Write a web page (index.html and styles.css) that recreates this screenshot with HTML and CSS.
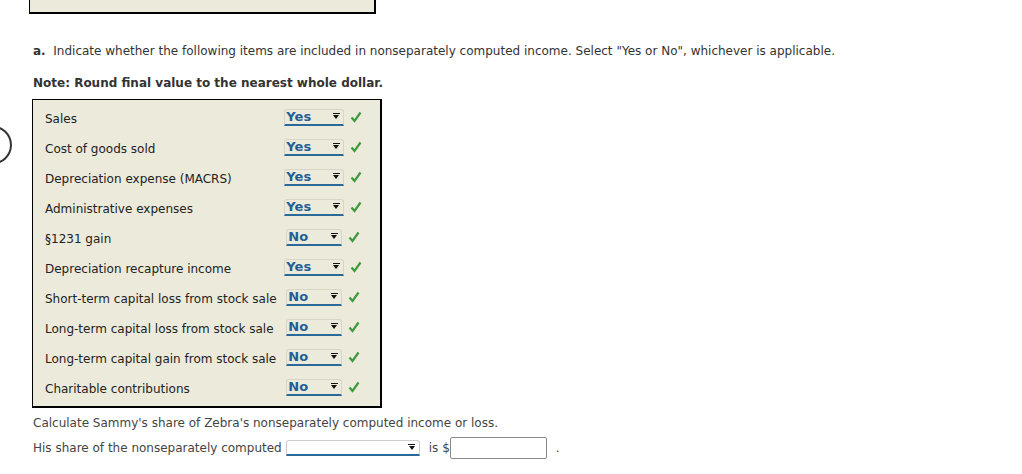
FILE: index.html
```html
<!DOCTYPE html>
<html>
<head>
<meta charset="utf-8">
<link rel="stylesheet" href="styles.css">
</head>
<body>
<div class="circle"></div>
<div class="page">
  <div class="prev-box">
    <div class="prev-row"><span>Charitable contributions</span><span>(4,200)</span></div>
  </div>

  <p class="instr"><b>a.</b>&nbsp; Indicate whether the following items are included in nonseparately computed income. Select "Yes or No", whichever is applicable.</p>
  <p class="note">Note: Round final value to the nearest whole dollar.</p>

  <div class="answer-box">
    <div class="grid">
      <div class="label">Sales</div>
      <div class="cell"><span class="sel yes">Yes<i class="arr"></i></span><svg class="chk" viewBox="0 0 12 12"><path d="M1.5 6.5 L4.5 10 L10.5 1.5" /></svg></div>

      <div class="label">Cost of goods sold</div>
      <div class="cell"><span class="sel yes">Yes<i class="arr"></i></span><svg class="chk" viewBox="0 0 12 12"><path d="M1.5 6.5 L4.5 10 L10.5 1.5" /></svg></div>

      <div class="label">Depreciation expense (MACRS)</div>
      <div class="cell"><span class="sel yes">Yes<i class="arr"></i></span><svg class="chk" viewBox="0 0 12 12"><path d="M1.5 6.5 L4.5 10 L10.5 1.5" /></svg></div>

      <div class="label">Administrative expenses</div>
      <div class="cell"><span class="sel yes">Yes<i class="arr"></i></span><svg class="chk" viewBox="0 0 12 12"><path d="M1.5 6.5 L4.5 10 L10.5 1.5" /></svg></div>

      <div class="label">§1231 gain</div>
      <div class="cell"><span class="sel no">No<i class="arr"></i></span><svg class="chk" viewBox="0 0 12 12"><path d="M1.5 6.5 L4.5 10 L10.5 1.5" /></svg></div>

      <div class="label">Depreciation recapture income</div>
      <div class="cell"><span class="sel yes">Yes<i class="arr"></i></span><svg class="chk" viewBox="0 0 12 12"><path d="M1.5 6.5 L4.5 10 L10.5 1.5" /></svg></div>

      <div class="label">Short-term capital loss from stock sale</div>
      <div class="cell"><span class="sel no">No<i class="arr"></i></span><svg class="chk" viewBox="0 0 12 12"><path d="M1.5 6.5 L4.5 10 L10.5 1.5" /></svg></div>

      <div class="label">Long-term capital loss from stock sale</div>
      <div class="cell"><span class="sel no">No<i class="arr"></i></span><svg class="chk" viewBox="0 0 12 12"><path d="M1.5 6.5 L4.5 10 L10.5 1.5" /></svg></div>

      <div class="label">Long-term capital gain from stock sale</div>
      <div class="cell"><span class="sel no">No<i class="arr"></i></span><svg class="chk" viewBox="0 0 12 12"><path d="M1.5 6.5 L4.5 10 L10.5 1.5" /></svg></div>

      <div class="label">Charitable contributions</div>
      <div class="cell"><span class="sel no">No<i class="arr"></i></span><svg class="chk" viewBox="0 0 12 12"><path d="M1.5 6.5 L4.5 10 L10.5 1.5" /></svg></div>
    </div>
  </div>

  <p class="calc">Calculate Sammy's share of Zebra's nonseparately computed income or loss.</p>
  <div class="share">
    <span>His share of the nonseparately computed</span>
    <span class="sel wide"><i class="arr"></i></span>
    <span class="is">is $</span>
    <span class="input"></span>
    <span class="dot">.</span>
  </div>
</div>
</body>
</html>
```
FILE: styles.css
```css
html, body {
  margin: 0;
  padding: 0;
  background: #fff;
}
body {
  font-family: "DejaVu Sans", Verdana, sans-serif;
  font-size: 12px;
  color: #333;
  position: relative;
  overflow: hidden;
  height: 474px;
}
.circle {
  position: absolute;
  left: -30px;
  top: 125px;
  width: 38px;
  height: 36px;
  border: 2px solid #333;
  border-radius: 50%;
}
.page {
  padding-left: 33px;
}
.prev-box {
  margin-left: -4px;
  width: 347px;
  height: 32px;
  margin-top: -18px;
  border: 1px solid #000;
  border-width: 1px 2px 2px 1px;
  background: #eceadb;
  box-sizing: border-box;
}
.prev-row {
  display: flex;
  justify-content: space-between;
  padding: 4px 14px 0 16px;
  color: #222;
}
.instr {
  margin: 29px 0 0;
  line-height: 16px;
}
.instr b { color: #333; }
.note {
  margin: 16px 0 0;
  font-weight: bold;
  line-height: 16px;
}
.answer-box {
  margin-top: 8px;
  margin-left: -1px;
  width: 350px;
  box-sizing: border-box;
  border: 1px solid #000;
  border-width: 1px 2px 2px 1px;
  background: #eceadb;
  padding: 4px 0 2px 12px;
}
.grid {
  display: grid;
  grid-template-columns: max-content 1fr;
  grid-auto-rows: 30px;
  align-items: center;
}
.label {
  color: #222;
  padding-right: 4px;
}
.cell {
  display: flex;
  align-items: center;
  justify-content: center;
  gap: 6px;
  padding-right: 14px;
  margin-top: -4px;
}
.sel {
  position: relative;
  display: inline-block;
  height: 17px;
  box-sizing: border-box;
  border: 1px solid #d8d4c8;
  border-bottom: 2px solid #2a6a9a;
  border-radius: 3px 3px 0 0;
  color: #1f5f95;
  font-weight: bold;
  font-size: 13px;
  line-height: 14px;
  padding-left: 1px;
}
.sel.yes { width: 60px; }
.sel.no { width: 56px; }
.arr {
  position: absolute;
  right: 4px;
  top: 5px;
  width: 0;
  height: 0;
  border-left: 3.5px solid transparent;
  border-right: 3.5px solid transparent;
  border-top: 4px solid #111;
}
.arr::before {
  content: "";
  position: absolute;
  left: -3.5px;
  top: -6px;
  width: 7px;
  height: 1px;
  background: #111;
}
.chk {
  width: 12px;
  height: 12px;
  fill: none;
  stroke: #3d9a3d;
  stroke-width: 2.2;
}
.calc {
  margin: 7px 0 0;
  line-height: 16px;
  color: #444;
}
.share {
  margin-top: 6px;
  display: flex;
  align-items: center;
  color: #444;
  height: 22px;
}
.sel.wide {
  width: 134px;
  margin-left: 4px;
  height: 16px;
  background: #fff;
  border-color: #ccc;
  border-bottom-color: #2a6a9a;
}
.is {
  margin-left: 9px;
}
.input {
  display: inline-block;
  width: 97px;
  height: 22px;
  box-sizing: border-box;
  border: 1px solid #888;
  border-radius: 2px;
  background: #fff;
}
.dot {
  margin-left: 9px;
}
```
